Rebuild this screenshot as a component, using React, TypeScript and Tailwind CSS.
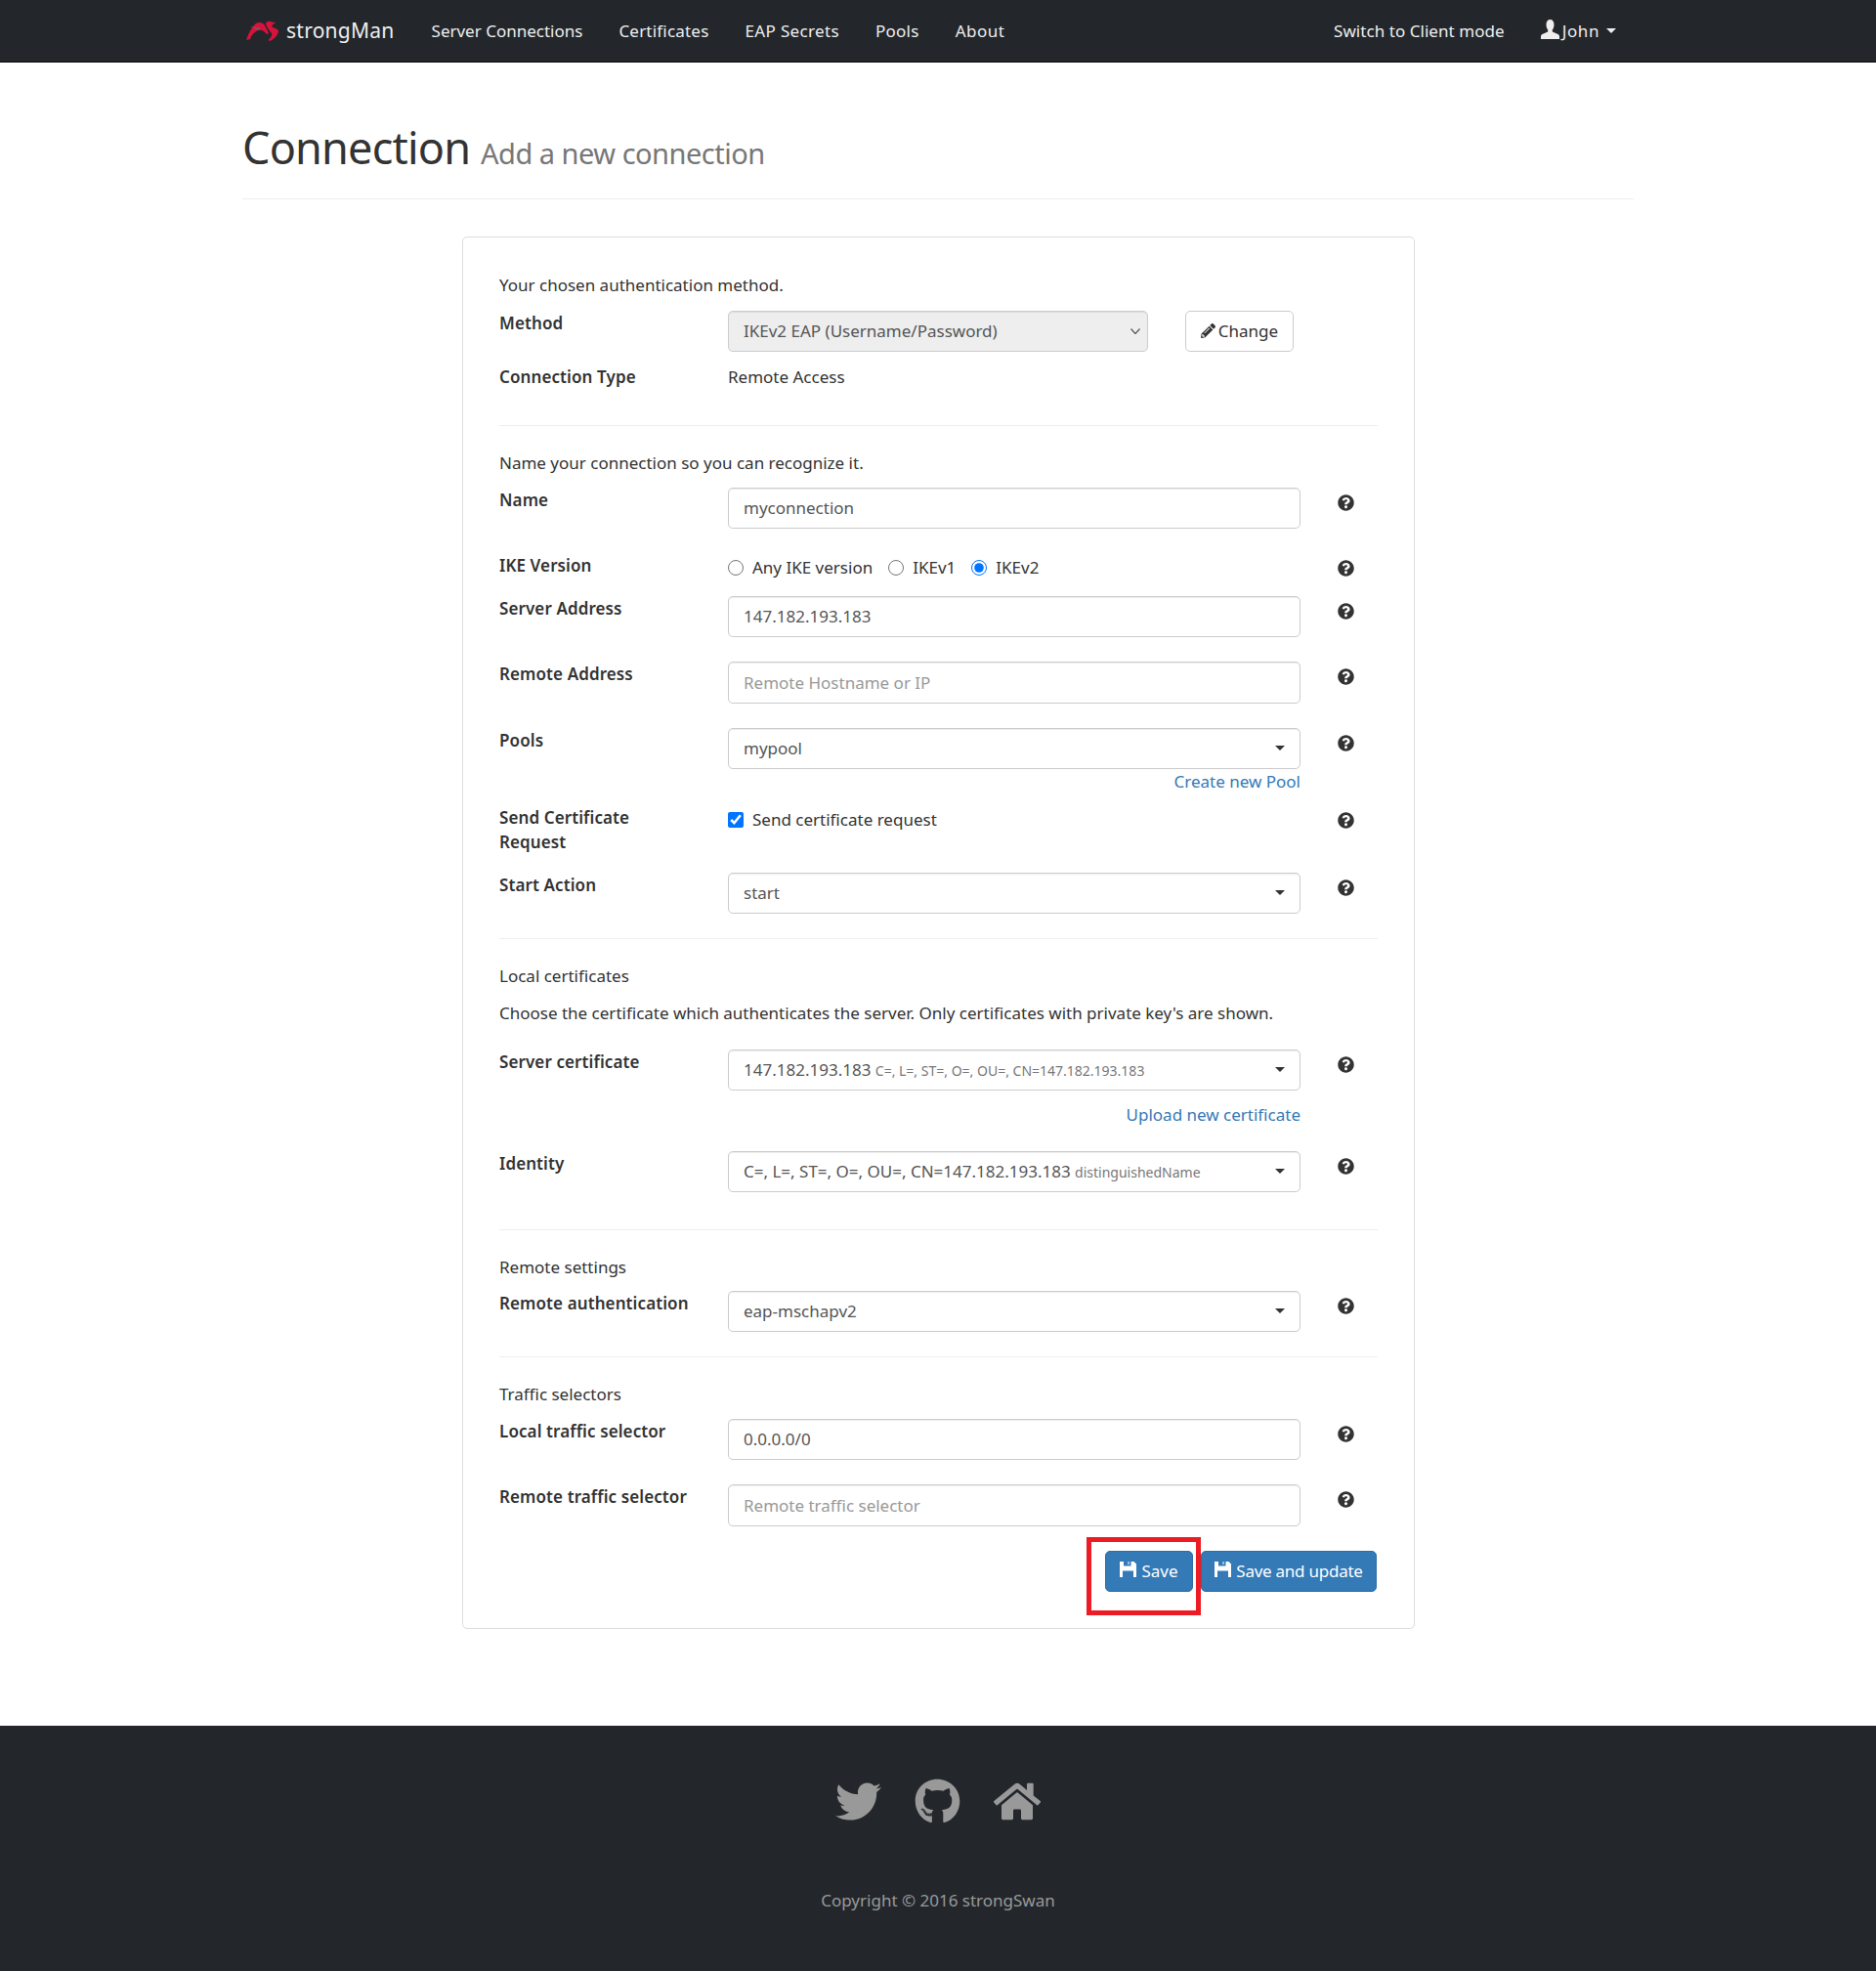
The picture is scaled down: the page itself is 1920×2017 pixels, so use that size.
import React from "react";
import { FaTwitter, FaGithub, FaHome, FaQuestionCircle, FaPencilAlt } from "react-icons/fa";

function Help() {
  return <FaQuestionCircle className="w-[17px] h-[17px] text-[#333] mt-[7px] ml-[38px] shrink-0" />;
}
function Floppy() {
  return (
    <svg viewBox="0 0 17 16" className="w-[17px] h-[16px] fill-white shrink-0 mb-[3px]">
      <path fillRule="evenodd" d="M0 0H14.500L17 2.500V16H14V9.500H3V16H0ZM4 0V4.500H11.500V0H9.500V3H8.500V0Z" />
    </svg>
  );
}
function UserIcon() {
  return (
    <svg viewBox="0 0 19 20" className="w-[19px] h-[20px] fill-[#eee] shrink-0 mb-[3px]">
      <path d="M9.500 0C7 0 5.500 2 5.500 5c0 2.300.6 4.200 1.700 5.600v1.900L1.500 15C.5 15.500 0 16.300 0 17.500V20h19v-2.500c0-1.200-.5-2-1.500-2.500l-5.700-2.500v-1.900C12.900 9.200 13.500 7.300 13.500 5 13.500 2 12 0 9.500 0z" />
    </svg>
  );
}
function Caret() {
  return <span className="inline-block w-0 h-0 border-x-[5px] border-x-transparent border-t-[5px] border-t-[#333] shrink-0" />;
}
function Box({ children, className = "" }: { children?: React.ReactNode; className?: string }) {
  return (
    <div className={"w-[586px] h-[42px] border border-[#ccc] rounded-[5px] bg-white pl-[15px] pr-[15px] pb-[1px] flex items-center justify-between text-[#555] whitespace-nowrap shadow-[inset_0_1px_1px_rgba(0,0,0,0.075)] " + className}>
      {children}
    </div>
  );
}
function Row({ label, children, className = "" }: { label: React.ReactNode; children: React.ReactNode; className?: string }) {
  return (
    <div className={"flex items-start " + className}>
      <div className="w-[234px] font-semibold tracking-[0.1px] text-[#333] shrink-0">{label}</div>
      <div className="w-[586px] shrink-0">{children}</div>
      <Help />
    </div>
  );
}
function Small({ children }: { children: React.ReactNode }) {
  return <span className="text-[14px] text-[#777]">{children}</span>;
}
function Select({ children }: { children: React.ReactNode }) {
  return (
    <Box>
      <span>{children}</span>
      <Caret />
    </Box>
  );
}
function Hr({ className = "" }: { className?: string }) {
  return <div className={"h-px bg-[#eee] " + className} />;
}
function Radio({ label, checked, className = "" }: { label: string; checked?: boolean; className?: string }) {
  return (
    <label className={"flex items-center whitespace-nowrap " + className}>
      <input type="radio" name="ike" defaultChecked={checked} className="w-[16px] h-[16px] m-0 mr-[9px]" />
      {label}
    </label>
  );
}

export default function App() {
  const navLink = "text-[#eee] whitespace-nowrap";
  return (
    <div className="font-['Noto_Sans',sans-serif] text-[17px] leading-[25px] text-[#333] bg-white min-h-[2017px] flex flex-col">
      <nav className="h-[64px] bg-[#23272c] border-b border-[#080808] shrink-0">
        <div className="w-[1424px] mx-auto h-full flex items-center justify-between">
          <div className="flex items-center">
            <svg viewBox="6 5 35 22" className="w-[35px] h-[22px] ml-[3px] mb-[-1px]">
              <path d="M7 25C9 19 13 11 17 8C20 6 24 7 26 10C27 13 29 15 30 18L28 19C25 15 22 14 19 15C15 17 12 20 11 24Z" fill="#d9123c" />
              <path d="M27 8C28 5.500 31 5 33 6.500L37 7L34.500 9C33 10 33 11 34 12C37 13 40 14 40 16C39 20 36 24 31 26L29.500 25C32 23 34 20 33 18C31 16 29 13 28 11Z" fill="#d9123c" />
              <path d="M11 11L21 13L20 15Z" fill="#666" />
            </svg>
            <span className="ml-[7px] text-[21px] text-[#eee] tracking-[0.25px]">strongMan</span>
            <div className="flex items-center ml-[38px] gap-[37px]">
              <span className={navLink}>Server Connections</span>
              <span className={navLink + " tracking-[0.2px]"}>Certificates</span>
              <span className={navLink + " tracking-[0.35px]"}>EAP Secrets</span>
              <span className={navLink + " tracking-[0.25px]"}>Pools</span>
              <span className={navLink + " tracking-[0.5px]"}>About</span>
            </div>
          </div>
          <div className="flex items-center pr-[18px]">
            <span className={navLink + " tracking-[0.05px]"}>Switch to Client mode</span>
            <span className="ml-[37px]"><UserIcon /></span>
            <span className={navLink + " ml-[3px] tracking-[0.6px]"}>John</span>
            <span className="ml-[7px] inline-block w-0 h-0 border-x-[5px] border-x-transparent border-t-[5px] border-t-[#eee]" />
          </div>
        </div>
      </nav>

      <main className="w-[1424px] mx-auto flex-1">
        <div className="h-[140px] border-b border-[#eee] flex items-end pb-[21px] mb-[38px]">
          <h1 className="text-[45px] leading-[50px] font-normal tracking-[-0.8px]">
            Connection <small className="text-[29px] text-[#777] tracking-[-0.5px]">Add a new connection</small>
          </h1>
        </div>

        <div className="ml-[225px] w-[975px] border border-[#ddd] rounded-[5px] px-[37px] pt-[36px] pb-[37px]">
          <p>Your chosen authentication method.</p>
          <div className="flex items-start mt-[14px]">
            <div className="w-[234px] font-semibold tracking-[0.1px]">Method</div>
            <div className="w-[430px] h-[42px] border border-[#ccc] rounded-[5px] bg-[#eee] pl-[15px] pr-[7px] pb-[1px] flex items-center justify-between text-[#555] whitespace-nowrap shadow-[inset_0_1px_1px_rgba(0,0,0,0.075)]">
              <span>IKEv2 EAP (Username/Password)</span>
              <svg viewBox="0 0 10 6" className="w-[10px] h-[6px] fill-none stroke-[#555] stroke-[1.2]"><path d="M.5.5 5 5.500 9.500.5" /></svg>
            </div>
            <div className="ml-[38px] w-[111px] h-[42px] border border-[#ccc] rounded-[5px] bg-white pb-[1px] flex items-center justify-center whitespace-nowrap">
              <FaPencilAlt className="w-[15px] h-[15px] mr-[3px] text-[#333]" />
              Change
            </div>
          </div>
          <div className="flex items-start mt-[13px]">
            <div className="w-[234px] font-semibold tracking-[0.1px]">Connection Type</div>
            <div>Remote Access</div>
          </div>
          <Hr className="mt-[37px]" />

          <p className="mt-[25px]">Name your connection so you can recognize it.</p>
          <Row label="Name" className="mt-[13px]"><Box>myconnection</Box></Row>
          <Row label="IKE Version" className="mt-[25px] h-[44px]">
            <div className="flex items-center mt-[2px]">
              <Radio label="Any IKE version" />
              <Radio label="IKEv1" className="ml-[16px]" />
              <Radio label="IKEv2" checked className="ml-[16px]" />
            </div>
          </Row>
          <Row label="Server Address"><Box>147.182.193.183</Box></Row>
          <Row label="Remote Address" className="mt-[25px]"><Box className="h-[43px] text-[#999]">Remote Hostname or IP</Box></Row>
          <Row label="Pools" className="mt-[25px]">
            <Select>mypool</Select>
            <div className="text-right text-[#337ab7]">Create new Pool</div>
          </Row>
          <Row label={<>Send Certificate<br />Request</>} className="mt-[12px]">
            <label className="flex items-center mt-[2px]">
              <input type="checkbox" defaultChecked className="w-[16px] h-[16px] m-0 mr-[9px]" />
              Send certificate request
            </label>
          </Row>
          <Row label="Start Action" className="mt-[19px]"><Select>start</Select></Row>
          <Hr className="mt-[25px]" />

          <p className="mt-[25px]">Local certificates</p>
          <p className="mt-[13px]">Choose the certificate which authenticates the server. Only certificates with private key's are shown.</p>
          <Row label="Server certificate" className="mt-[25px]">
            <Select>147.182.193.183 <Small>C=, L=, ST=, O=, OU=, CN=147.182.193.183</Small></Select>
            <div className="text-right text-[#337ab7] mt-[12px]">Upload new certificate</div>
          </Row>
          <Row label="Identity" className="mt-[25px]">
            <Select>C=, L=, ST=, O=, OU=, CN=147.182.193.183 <Small>distinguishedName</Small></Select>
          </Row>
          <Hr className="mt-[38px]" />

          <p className="mt-[25px]">Remote settings</p>
          <Row label="Remote authentication" className="mt-[12px]"><Select>eap-mschapv2</Select></Row>
          <Hr className="mt-[25px]" />

          <p className="mt-[25px]">Traffic selectors</p>
          <Row label="Local traffic selector" className="mt-[13px]"><Box>0.0.0.0/0</Box></Row>
          <Row label="Remote traffic selector" className="mt-[25px]"><Box className="h-[43px] text-[#999]">Remote traffic selector</Box></Row>

          <div className="flex justify-end mt-[25px] pr-[1px]">
            <div className="relative mr-[8px]">
              <button className="w-[90px] h-[42px] rounded-[5px] bg-[#337ab7] border border-[#2e6da4] pb-[1px] text-white flex items-center justify-center whitespace-nowrap">
                <Floppy /><span className="ml-[5px]">Save</span>
              </button>
              <div className="absolute left-[-19px] top-[-14px] w-[117px] h-[80px] border-[5px] border-[#ed1c24] pointer-events-none" />
            </div>
            <button className="w-[180px] h-[42px] rounded-[5px] bg-[#337ab7] border border-[#2e6da4] pb-[1px] text-white flex items-center justify-center whitespace-nowrap tracking-[-0.25px]">
              <Floppy /><span className="ml-[5px]">Save and update</span>
            </button>
          </div>
        </div>
      </main>

      <footer className="h-[251px] bg-[#23272c] flex flex-col items-center shrink-0">
        <div className="flex items-center h-[45px] mt-[55px] text-[#999]">
          <FaTwitter className="w-[47px] h-[47px]" />
          <FaGithub className="w-[47px] h-[47px] ml-[34px]" />
          <FaHome className="w-[48px] h-[43px] ml-[34px]" />
        </div>
        <p className="mt-[66px] text-[#999]">Copyright © 2016 strongSwan</p>
      </footer>
    </div>
  );
}
